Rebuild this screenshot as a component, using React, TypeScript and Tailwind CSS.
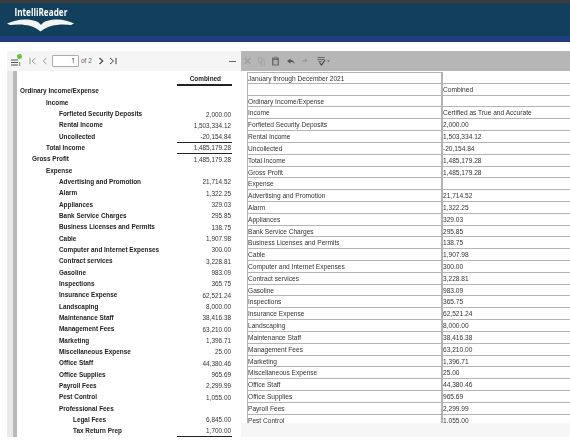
const reportRows: { label: string; value?: string; indent: string; rule?: boolean }[] = [
  { label: "Ordinary Income/Expense", indent: "pl-[3px]" },
  { label: "Income", indent: "pl-[29px]" },
  { label: "Forfieted Security Deposits", value: "2,000.00", indent: "pl-[42px]" },
  { label: "Rental Income", value: "1,503,334.12", indent: "pl-[42px]" },
  { label: "Uncollected", value: "-20,154.84", indent: "pl-[42px]", rule: true },
  { label: "Total Income", value: "1,485,179.28", indent: "pl-[29px]", rule: true },
  { label: "Gross Profit", value: "1,485,179.28", indent: "pl-[15px]" },
  { label: "Expense", indent: "pl-[29px]" },
  { label: "Advertising and Promotion", value: "21,714.52", indent: "pl-[42px]" },
  { label: "Alarm", value: "1,322.25", indent: "pl-[42px]" },
  { label: "Appliances", value: "329.03", indent: "pl-[42px]" },
  { label: "Bank Service Charges", value: "295.85", indent: "pl-[42px]" },
  { label: "Business Licenses and Permits", value: "138.75", indent: "pl-[42px]" },
  { label: "Cable", value: "1,907.98", indent: "pl-[42px]" },
  { label: "Computer and Internet Expenses", value: "300.00", indent: "pl-[42px]" },
  { label: "Contract services", value: "3,228.81", indent: "pl-[42px]" },
  { label: "Gasoline", value: "983.09", indent: "pl-[42px]" },
  { label: "Inspections", value: "365.75", indent: "pl-[42px]" },
  { label: "Insurance Expense", value: "62,521.24", indent: "pl-[42px]" },
  { label: "Landscaping", value: "8,000.00", indent: "pl-[42px]" },
  { label: "Maintenance Staff", value: "38,416.38", indent: "pl-[42px]" },
  { label: "Management Fees", value: "63,210.00", indent: "pl-[42px]" },
  { label: "Marketing", value: "1,396.71", indent: "pl-[42px]" },
  { label: "Miscellaneous Expense", value: "25.00", indent: "pl-[42px]" },
  { label: "Office Staff", value: "44,380.46", indent: "pl-[42px]" },
  { label: "Office Supplies", value: "965.69", indent: "pl-[42px]" },
  { label: "Payroll Fees", value: "2,299.99", indent: "pl-[42px]" },
  { label: "Pest Control", value: "1,055.00", indent: "pl-[42px]" },
  { label: "Professional Fees", indent: "pl-[42px]" },
  { label: "Legal Fees", value: "6,845.00", indent: "pl-[56px]" },
  { label: "Tax Return Prep", value: "1,700.00", indent: "pl-[56px]", rule: true },
];

const sheetRows: [string, string][] = [
  ["January through December 2021", ""],
  ["", "Combined"],
  ["Ordinary Income/Expense", ""],
  ["Income", "Certified as True and Accurate"],
  ["Forfieted Security Deposits", "2,000.00"],
  ["Rental Income", "1,503,334.12"],
  ["Uncollected", "-20,154.84"],
  ["Total Income", "1,485,179.28"],
  ["Gross Profit", "1,485,179.28"],
  ["Expense", ""],
  ["Advertising and Promotion", "21,714.52"],
  ["Alarm", "1,322.25"],
  ["Appliances", "329.03"],
  ["Bank Service Charges", "295.85"],
  ["Business Licenses and Permits", "138.75"],
  ["Cable", "1,907.98"],
  ["Computer and Internet Expenses", "300.00"],
  ["Contract services", "3,228.81"],
  ["Gasoline", "983.09"],
  ["Inspections", "365.75"],
  ["Insurance Expense", "62,521.24"],
  ["Landscaping", "8,000.00"],
  ["Maintenance Staff", "38,416.38"],
  ["Management Fees", "63,210.00"],
  ["Marketing", "1,396.71"],
  ["Miscellaneous Expense", "25.00"],
  ["Office Staff", "44,380.46"],
  ["Office Supplies", "965.69"],
  ["Payroll Fees", "2,299.99"],
  ["Pest Control", "1,055.00"],
];

function Logo() {
  return (
    <div className="flex w-[68px] flex-col items-center">
      <span className="scale-x-[0.78] text-[10.5px] leading-[11px] font-bold whitespace-nowrap text-white font-['Open_Sans',sans-serif]">
        IntelliReader
      </span>
      <svg width="68" height="14" viewBox="0 0 68 14" className="-mt-[0.5px]">
        <path
          d="M0 5.500 C6 3 13 1 20 1.500 C28 2 32 4 34 7 C36 4 40 2 48 1.500 C55 1 62 3 67 5.500 L64 7 C54 5.500 42 6.500 33.500 13.500 C26 6.500 14 5.500 3 7 Z"
          fill="#f4f6f4"
        />
      </svg>
    </div>
  );
}

function ReportToolbar() {
  return (
    <div className="flex h-[20px] items-center bg-[#f5f5f5] text-[#666]">
      <div className="relative ml-[4px] h-[14px] w-[13px]">
        <svg width="10" height="8" viewBox="0 0 10 8" className="absolute left-0 top-[5px]">
          <path d="M0 1h7M0 3.500h7M0 6h7" stroke="#555" strokeWidth="1.200" />
          <path d="M8.700 3v4" stroke="#777" strokeWidth="1" />
        </svg>
        <span className="absolute left-[6px] top-0 h-[5px] w-[5px] rounded-full bg-[#5fc542]" />
      </div>
      <svg width="8" height="8" viewBox="0 0 8 8" className="ml-[5px]">
        <path d="M1 .8v6.400M6.500 1L3 4l3.500 3" fill="none" stroke="#999" strokeWidth="1" />
      </svg>
      <svg width="6" height="8" viewBox="0 0 6 8" className="ml-[5px]">
        <path d="M4.500 1L1.200 4l3.300 3" fill="none" stroke="#999" strokeWidth="1" />
      </svg>
      <div className="ml-[4px] flex h-[12px] w-[27px] items-center justify-end rounded-[1px] border border-[#aaa] bg-white pr-[3px] text-[6.5px] text-[#333]">
        1
      </div>
      <span className="ml-[2px] text-[6.5px] font-['Liberation_Sans',sans-serif]">of 2</span>
      <svg width="6" height="8" viewBox="0 0 6 8" className="ml-[6px]">
        <path d="M1.500 1L4.800 4L1.500 7" fill="none" stroke="#444" strokeWidth="1.100" />
      </svg>
      <svg width="8" height="8" viewBox="0 0 8 8" className="ml-[5px]">
        <path d="M1 1l3.500 3L1 7M7 .8v6.400" fill="none" stroke="#444" strokeWidth="1" />
      </svg>
      <span className="mr-[5px] ml-auto h-[1px] w-[7px] bg-[#666]" />
    </div>
  );
}

function SheetToolbar() {
  return (
    <div className="flex h-[20px] items-center bg-[#b6b6b6] pl-[3px]">
      <svg width="7" height="8" viewBox="0 0 7 8">
        <path d="M.5 1l6 6M6.500 1l-6 6" stroke="#9c9c9c" strokeWidth="1.500" />
      </svg>
      <svg width="7" height="9" viewBox="0 0 7 9" className="ml-[7px]">
        <path d="M.5 .8h3.500v5H.5zM3 3h3.500v5.200H3z" fill="none" stroke="#a3a3a3" strokeWidth=".8" />
      </svg>
      <svg width="7" height="10" viewBox="0 0 7 10" className="ml-[7px]">
        <path d="M0 1.500h7v8H0z" fill="#6e6e6e" />
        <path d="M2 .5h3v2H2z" fill="#8a8a8a" />
        <path d="M1.500 4h4v4.500h-4z" fill="#b0b0b0" />
      </svg>
      <svg width="8" height="7" viewBox="0 0 9 7" className="ml-[8px]">
        <path d="M4 0L0 3l4 3V4.200c2 0 3.500.4 4.500 2C8.300 3.500 6.500 2 4 1.900z" fill="#555" />
      </svg>
      <svg width="7" height="6" viewBox="0 0 9 7" className="ml-[6px]">
        <path d="M5 0l4 3-4 3V4.200c-2 0-3.500.4-4.500 2C.7 3.500 2.500 2 5 1.900z" fill="#9a9a9a" />
      </svg>
      <svg width="9" height="10" viewBox="0 0 9 10" className="ml-[9px]">
        <path d="M.5 1.500h7M.5 3.500h7M1.500 5.500h3" stroke="#666" strokeWidth="1" />
        <path d="M2.500 6.500l2 2.500 3.500-5" fill="none" stroke="#444" strokeWidth="1.200" />
      </svg>
      <svg width="3" height="3" viewBox="0 0 4 3" className="ml-[1px]">
        <path d="M0 0h4L2 2.500z" fill="#666" />
      </svg>
    </div>
  );
}

function Report() {
  return (
    <div className="flex-1 overflow-hidden bg-white text-[6.4px] text-[#222] blur-[0.25px] font-['Liberation_Sans',sans-serif]">
      <div className="flex h-[15px] items-end justify-end pr-[9px]">
        <span className="w-[55px] border-b-2 border-[#222] pr-[11px] pb-[1px] text-right leading-[8px] font-bold">
          Combined
        </span>
      </div>
      {reportRows.map((row) => (
        <div
          key={row.label}
          className={`flex h-[11.33px] items-center justify-between pr-[9px] ${row.indent}`}
        >
          <span className="leading-none font-bold whitespace-nowrap">{row.label}</span>
          {row.value && (
            <span
              className={`flex h-full w-[55px] items-center justify-end pr-[1px] text-[#333] ${
                row.rule ? "border-b border-[#222]" : ""
              }`}
            >
              {row.value}
            </span>
          )}
        </div>
      ))}
    </div>
  );
}

function Sheet() {
  return (
    <div className="min-h-0 flex-1 overflow-hidden bg-white pt-[1px] pl-[6px] text-[6.6px] text-[#333] blur-[0.2px] font-['Liberation_Sans',sans-serif]">
      {sheetRows.map(([left, right], i) => (
        <div key={i} className="flex h-[11.82px] border-b border-[#b4b4b4]">
          <div
            className={`w-[194px] border-l border-[#b4b4b4] leading-[11px] whitespace-nowrap ${
              i === 0 ? "border-t" : ""
            }`}
          >
            {left}
          </div>
          <div className="flex-1 border-l-2 border-[#b4b4b4] leading-[11px] whitespace-nowrap">
            {right}
          </div>
        </div>
      ))}
    </div>
  );
}

export default function App() {
  return (
    <div className="flex h-[441px] w-[570px] flex-col overflow-hidden bg-white">
      <div className="h-[3px] bg-[#3d3d3d]" />
      <div className="flex h-[33px] items-start bg-[#123f5c] pt-[4px] pl-[7px]">
        <Logo />
      </div>
      <div className="h-[6px] bg-gradient-to-b from-[#1c3f7a] to-[#243a85]" />
      <div className="flex h-[399px] pt-[9px] pb-[4px] pl-[7px]">
        <div className="flex w-[234px] flex-col">
          <ReportToolbar />
          <div className="flex min-h-0 flex-1">
            <div className="w-[6px] bg-[#e9e9e9]" />
            <div className="w-[4px] bg-[#b9b9b9]" />
            <Report />
          </div>
        </div>
        <div className="flex w-[329px] flex-col">
          <SheetToolbar />
          <Sheet />
          <div className="h-[14px] bg-[#f6f6f6]" />
        </div>
      </div>
    </div>
  );
}
